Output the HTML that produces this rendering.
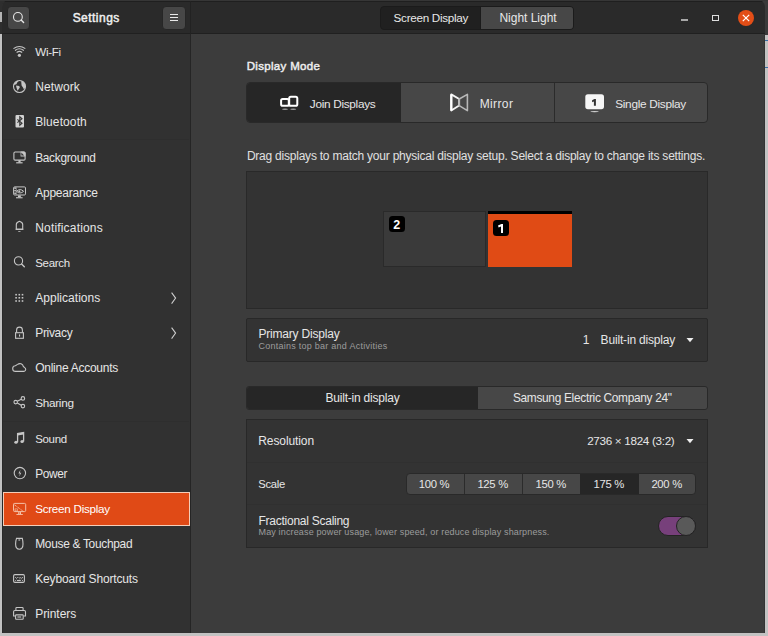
<!DOCTYPE html>
<html><head><meta charset="utf-8">
<style>
*{margin:0;padding:0;box-sizing:border-box}
html,body{width:768px;height:636px;overflow:hidden;background:#c2c2c2;font-family:"Liberation Sans",sans-serif}
.a{position:absolute}
.t{position:absolute;white-space:nowrap}
svg{position:absolute;overflow:visible}
#win{position:absolute;left:2px;top:0;width:763px;height:633px;background:#3c3c3c;border-radius:7px 7px 0 0;overflow:hidden}
#hdr{position:absolute;left:0;top:0;width:763px;height:34px;background:#2a2a2a;border-bottom:1px solid #202020;border-top:2px solid #1f1f1f}
#hdiv{position:absolute;left:188px;top:0;width:1px;height:34px;background:#222}
#side{position:absolute;left:0;top:34px;width:189px;height:599px;background:#313131;border-right:1px solid #252525}
.btn{position:absolute;background:#474747;border-radius:4px;border:1px solid #262626}
.box{position:absolute;background:#333333;border:1px solid #282828;border-radius:3px}
.sep{position:absolute;height:1px;background:#303030}
</style></head><body>
<div class="a" style="left:0;top:0;width:12px;height:34px;background:#2e2e2e"></div>
<div class="a" style="left:752px;top:0;width:16px;height:35px;background:#3a3a3a"></div>
<div class="a" style="left:765px;top:40px;width:3px;height:1px;background:#3a6ea5"></div>
<div class="a" style="left:765px;top:67px;width:3px;height:1px;background:#3a6ea5"></div>
<div class="a" style="left:0;top:12px;width:2px;height:10px;background:#b4b4b4"></div>
<div id="win">
  <div id="hdr"></div>
  <div id="hdiv"></div>
  <div id="side"></div>
</div>
<div class="a" style="left:0;top:0;width:768px;height:1px;background:#363636"></div>
<div class="a" style="left:2px;top:34px;width:1px;height:599px;background:#292929"></div>
<div class="a" style="left:764px;top:34px;width:1px;height:599px;background:#333"></div>
<!-- header buttons -->
<div class="btn" style="left:7px;top:6px;width:23px;height:23.8px"></div>
<svg style="left:8px;top:7px" width="22" height="22"><circle cx="9.9" cy="9.9" r="4.4" fill="none" stroke="#e6e6e6" stroke-width="1.1"/><line x1="13.1" y1="13.1" x2="15.6" y2="15.6" stroke="#e6e6e6" stroke-width="1.4" stroke-linecap="round"/></svg>
<div class="btn" style="left:162px;top:6px;width:23.8px;height:23.8px"></div>
<div class="a" style="left:170px;top:14px;width:8.2px;height:1.1px;background:#e8e8e8"></div><div class="a" style="left:170px;top:17px;width:8.2px;height:1.1px;background:#e8e8e8"></div><div class="a" style="left:170px;top:20px;width:8.2px;height:1.1px;background:#e8e8e8"></div>
<!-- tab switcher -->
<div class="a" style="left:380px;top:6px;width:194px;height:24px;border:1px solid #1b1b1b;border-radius:4px;background:#202020;overflow:hidden">
  <div class="a" style="left:99px;top:0;width:94px;height:22px;background:#474747;border-left:1px solid #1b1b1b"></div>
</div>
<!-- window controls -->
<div class="a" style="left:681px;top:19px;width:6.5px;height:1.6px;background:#a8a8a8"></div>
<div class="a" style="left:712px;top:14.8px;width:6.6px;height:6.2px;border:1.2px solid #dedede"></div>
<div class="a" style="left:738px;top:10px;width:16px;height:16px;border-radius:50%;background:#e34e17"></div>
<svg style="left:738px;top:10px" width="16" height="16"><g stroke="#fff" stroke-width="1.2"><line x1="4.8" y1="4.8" x2="11.2" y2="11.2"/><line x1="11.2" y1="4.8" x2="4.8" y2="11.2"/></g></svg>

<!-- selected sidebar row -->
<div class="a" style="left:2.8px;top:491.5px;width:187.7px;height:34.8px;background:#e04a16;border:1.2px solid #f5cdb8"></div>
<div class="a" style="left:3px;top:139px;width:186px;height:1px;background:#2e2e2e"></div>
<div class="a" style="left:3px;top:421px;width:186px;height:1px;background:#2e2e2e"></div>
<svg style="left:8px;top:40px" width="24" height="24" viewBox="0 0 24 24"><g fill="none" stroke="#c6c6c6" stroke-width="1.1" stroke-linecap="round">
<path d="M5.9 8.4 A9.1 9.1 0 0 1 16.9 8.4"/>
<path d="M7.4 10.3 A6.6 6.6 0 0 1 15.4 10.3"/>
<path d="M9.0 12.3 A4.1 4.1 0 0 1 13.8 12.3"/></g>
<circle cx="11.4" cy="15.3" r="1.6" fill="#c6c6c6"/></svg>
<svg style="left:8px;top:75px" width="24" height="24" viewBox="0 0 24 24"><circle cx="11.5" cy="11.5" r="6.0" fill="none" stroke="#c6c6c6" stroke-width="1.1"/>
<path d="M5.8 10.0 Q6.6 7.2 9.2 5.8 L10.6 6.0 Q9.0 7.6 8.4 9.2 Z" fill="#c6c6c6"/>
<path d="M8.0 10.6 L11.3 11.0 L11.8 12.6 L10.6 14.2 L9.6 15.8 L9.0 14.2 L8.4 12.2 Z" fill="#c6c6c6"/>
<path d="M13.2 6.2 L15.0 6.6 L17.2 9.4 L17.2 12.6 L16.0 14.4 L15.0 12.6 L13.6 10.6 L13.4 8.6 Z" fill="#c6c6c6"/></svg>
<svg style="left:8px;top:110px" width="24" height="24" viewBox="0 0 24 24"><rect x="7.5" y="4.9" width="8.5" height="12.6" rx="1" fill="#d2d2d2"/>
<path d="M9.4 9.4 L14.0 13.2 L11.8 15.2 L11.8 6.8 L14.0 8.8 L9.4 12.6" fill="none" stroke="#333" stroke-width="1.1"/></svg>
<svg style="left:8px;top:145px" width="24" height="24" viewBox="0 0 24 24"><rect x="5.9" y="7.0" width="11.2" height="8.1" rx="1.2" fill="none" stroke="#c6c6c6" stroke-width="1.1"/>
<path d="M12.6 6.4 H16 A1.5 1.5 0 0 1 17.5 7.9 V11.6 H12.6 Z" fill="#c6c6c6"/>
<path d="M13.3 7.6 L16.2 10.6 L13.3 10.6 Z" fill="#333"/>
<rect x="10.4" y="15.3" width="2.2" height="2.2" fill="#c6c6c6"/>
<rect x="8.2" y="17.2" width="6.4" height="1.2" fill="#c6c6c6"/></svg>
<svg style="left:8px;top:180px" width="24" height="24" viewBox="0 0 24 24"><rect x="5.6" y="6.9" width="11.9" height="8.1" rx="1.1" fill="none" stroke="#c6c6c6" stroke-width="1"/>
<g fill="#c6c6c6"><rect x="6.3" y="7.4" width="1.6" height="1.5"/><rect x="6.3" y="10.0" width="1.6" height="1.3"/><rect x="6.3" y="12.6" width="1.6" height="1.5"/></g>
<line x1="8.3" y1="7.4" x2="8.3" y2="14.6" stroke="#c6c6c6" stroke-width="0.6"/>
<path d="M8.6 11.3 Q12.0 7.9 15.6 11.3 Q12.0 14.6 8.6 11.3 Z" fill="none" stroke="#c6c6c6" stroke-width="1"/>
<path d="M11.3 10.0 L12.6 12.0 H10.0 Z" fill="#c6c6c6"/>
<rect x="10.0" y="15.4" width="2.8" height="1.9" fill="#c6c6c6"/>
<rect x="8.0" y="17.2" width="6.6" height="1.1" fill="#c6c6c6"/></svg>
<svg style="left:8px;top:215px" width="24" height="24" viewBox="0 0 24 24"><path d="M8.3 14.3 V9.6 Q8.3 7.4 11.5 6.3 Q14.7 7.4 14.7 9.6 V14.3 Z" fill="none" stroke="#c6c6c6" stroke-width="1.1"/>
<line x1="7.7" y1="14.3" x2="15.3" y2="14.3" stroke="#c6c6c6" stroke-width="1.2"/>
<path d="M9.9 15.9 H12.9 Q11.4 17.6 9.9 15.9 Z" fill="#c6c6c6"/></svg>
<svg style="left:8px;top:250px" width="24" height="24" viewBox="0 0 24 24"><circle cx="10.5" cy="10.9" r="4.1" fill="none" stroke="#c6c6c6" stroke-width="1.1"/>
<line x1="13.6" y1="14.0" x2="16.3" y2="16.7" stroke="#c6c6c6" stroke-width="1.4" stroke-linecap="round"/></svg>
<svg style="left:8px;top:286px" width="24" height="24" viewBox="0 0 24 24"><rect x="7.3" y="7.8999999999999995" width="1.6" height="1.6" fill="#c6c6c6"/><rect x="7.3" y="11.0" width="1.6" height="1.6" fill="#c6c6c6"/><rect x="7.3" y="14.2" width="1.6" height="1.6" fill="#c6c6c6"/><rect x="10.5" y="7.8999999999999995" width="1.6" height="1.6" fill="#c6c6c6"/><rect x="10.5" y="11.0" width="1.6" height="1.6" fill="#c6c6c6"/><rect x="10.5" y="14.2" width="1.6" height="1.6" fill="#c6c6c6"/><rect x="13.7" y="7.8999999999999995" width="1.6" height="1.6" fill="#c6c6c6"/><rect x="13.7" y="11.0" width="1.6" height="1.6" fill="#c6c6c6"/><rect x="13.7" y="14.2" width="1.6" height="1.6" fill="#c6c6c6"/></svg>
<svg style="left:8px;top:321px" width="24" height="24" viewBox="0 0 24 24"><rect x="7.6" y="11.7" width="7.8" height="5.6" fill="none" stroke="#c6c6c6" stroke-width="1.1"/>
<path d="M8.6 11.4 V9.0 A2.9 2.9 0 0 1 14.4 9.0 V11.4" fill="none" stroke="#c6c6c6" stroke-width="1.1"/>
<rect x="11" y="13.4" width="1.1" height="2.2" fill="#c6c6c6"/></svg>
<svg style="left:8px;top:356px" width="24" height="24" viewBox="0 0 24 24"><path d="M7.6 15.4 H16.0 A2.0 2.0 0 0 0 16.3 11.5 A1.8 1.8 0 0 0 15.4 10.6 A3.6 3.6 0 0 0 9.6 8.4 L7.4 9.8 A2.8 2.8 0 0 0 7.6 15.4 Z" fill="none" stroke="#c6c6c6" stroke-width="1.1"/></svg>
<svg style="left:8px;top:391px" width="24" height="24" viewBox="0 0 24 24"><g fill="none" stroke="#c6c6c6" stroke-width="1.1"><circle cx="7.7" cy="11.1" r="1.75"/><circle cx="14.9" cy="7.4" r="1.75"/><circle cx="14.9" cy="15.1" r="1.75"/>
<line x1="9.3" y1="10.2" x2="13.3" y2="8.2"/><line x1="9.3" y1="12.0" x2="13.3" y2="14.2"/></g></svg>
<svg style="left:8px;top:426px" width="24" height="24" viewBox="0 0 24 24"><path d="M9.6 16.2 V7.6 L15.6 6.6 V15.4" fill="none" stroke="#c6c6c6" stroke-width="1.3"/>
<path d="M9.6 7.6 L15.6 6.6 V8.6 L9.6 9.6 Z" fill="#c6c6c6"/>
<ellipse cx="8.0" cy="16.3" rx="1.7" ry="1.5" fill="#c6c6c6"/>
<ellipse cx="14.1" cy="15.4" rx="1.7" ry="1.5" fill="#c6c6c6"/></svg>
<svg style="left:8px;top:461px" width="24" height="24" viewBox="0 0 24 24"><circle cx="11.9" cy="12.1" r="5.7" fill="none" stroke="#c6c6c6" stroke-width="1.1"/>
<path d="M12.4 8.8 L10.4 12.4 H11.9 L11.3 15.6 L13.3 11.8 H11.9 Z" fill="#c6c6c6"/></svg>
<svg style="left:8px;top:497px" width="24" height="24" viewBox="0 0 24 24"><rect x="5.5" y="6.4" width="12.2" height="8.2" rx="1.2" fill="none" stroke="#f4c6ae" stroke-width="0.95"/>
<line x1="5.6" y1="7.2" x2="15.2" y2="14.3" stroke="#f4c6ae" stroke-width="0.9" stroke-dasharray="1.2 0.6"/>
<rect x="7.0" y="11.9" width="2.4" height="2.0" fill="none" stroke="#f4c6ae" stroke-width="0.6"/>
<rect x="10.2" y="15.1" width="1.2" height="1.9" fill="#f4c6ae"/><rect x="11.8" y="15.1" width="1.2" height="1.9" fill="#f4c6ae"/>
<rect x="8.4" y="17.0" width="6.4" height="0.9" fill="#f4c6ae"/></svg>
<svg style="left:8px;top:532px" width="24" height="24" viewBox="0 0 24 24"><path d="M8.5 6.4 H14.3 Q15.0 9.0 15.0 12.0 Q15.0 17.2 11.4 17.2 Q7.6 17.2 7.6 12.0 Q7.6 9.0 8.5 6.4 Z" fill="none" stroke="#c6c6c6" stroke-width="1.1"/>
<rect x="10.4" y="7.2" width="1.8" height="1.6" fill="#c6c6c6" opacity="0.7"/></svg>
<svg style="left:8px;top:567px" width="24" height="24" viewBox="0 0 24 24"><rect x="5.6" y="7.6" width="10.8" height="7.8" rx="1.3" fill="none" stroke="#c6c6c6" stroke-width="1.1"/>
<g fill="#c6c6c6"><rect x="7.2" y="10.0" width="0.9" height="0.9"/><rect x="8.9" y="10.0" width="0.9" height="0.9"/><rect x="10.6" y="10.0" width="0.9" height="0.9"/><rect x="12.3" y="10.0" width="0.9" height="0.9"/><rect x="14.0" y="10.0" width="0.9" height="0.9"/>
<rect x="8.0" y="11.3" width="0.9" height="0.9"/><rect x="11.4" y="11.3" width="0.9" height="0.9"/><rect x="13.2" y="11.3" width="0.9" height="0.9"/>
<rect x="7.2" y="13.0" width="0.9" height="0.9"/><rect x="9.0" y="12.9" width="3.8" height="1.1"/><rect x="14.0" y="13.0" width="0.9" height="0.9"/></g></svg>
<svg style="left:8px;top:602px" width="24" height="24" viewBox="0 0 24 24"><rect x="7.9" y="5.5" width="7.2" height="3.0" rx="0.8" fill="none" stroke="#c6c6c6" stroke-width="1.1"/>
<path d="M7.3 14.0 H5.6 V9.7 A1.2 1.2 0 0 1 6.8 8.5 H16.3 A1.2 1.2 0 0 1 17.5 9.7 V14.0 H15.6" fill="none" stroke="#c6c6c6" stroke-width="1.1"/>
<rect x="7.6" y="12.9" width="7.6" height="4.4" rx="0.6" fill="none" stroke="#c6c6c6" stroke-width="1.1"/>
<rect x="9.4" y="14.3" width="3.8" height="1.4" fill="#c6c6c6" opacity="0.8"/></svg>
<svg style="left:170px;top:291.8px" width="8" height="13"><path d="M1.6 0.6 L5.6 6.1 L1.6 11.6" fill="none" stroke="#cfcfcf" stroke-width="1.05"/></svg>
<svg style="left:170px;top:327px" width="8" height="13"><path d="M1.6 0.6 L5.6 6.1 L1.6 11.6" fill="none" stroke="#cfcfcf" stroke-width="1.05"/></svg>

<!-- mode selector -->
<div class="a" style="left:246px;top:82px;width:462px;height:41px;border:1px solid #292929;border-radius:4px;background:#474747;overflow:hidden">
  <div class="a" style="left:0;top:0;width:154px;height:39px;background:#262626"></div>
  <div class="a" style="left:307px;top:0;width:1px;height:39px;background:#2b2b2b"></div>
</div>
<!-- arrangement -->
<div class="a" style="left:246px;top:171px;width:462px;height:138px;background:#333;border:1px solid #292929"></div>
<div class="a" style="left:383px;top:211px;width:103px;height:56px;background:#3a3a3a;border:1px solid #2a2a2a"></div>
<div class="a" style="left:488px;top:211px;width:84px;height:55.5px;background:#e04b15;border-top:3.6px solid #000"></div>
<div class="a" style="left:389px;top:216.2px;width:16px;height:15.4px;background:#000;border-radius:3.5px"></div>
<div class="a" style="left:493px;top:220px;width:16px;height:16px;background:#000;border-radius:3.5px"></div>
<svg style="left:493px;top:220px" width="16" height="16"><path d="M5.0 5.6 L8.4 4.0 H10.0 V12.9 H8.0 V6.6 L5.6 7.4 Z" fill="#fff"/></svg>
<!-- primary display -->
<div class="box" style="left:246px;top:318px;width:462px;height:44px;border-radius:2px"></div>
<svg style="left:686px;top:338px" width="8" height="5"><path d="M0.5 0 L7.5 0 L4 4.2 Z" fill="#eee"/></svg>
<!-- tabs -->
<div class="a" style="left:246px;top:386px;width:462px;height:24px;border:1px solid #292929;border-radius:3px;background:#474747;overflow:hidden">
  <div class="a" style="left:0;top:0;width:231px;height:22px;background:#262626"></div>
</div>
<!-- resolution box -->
<div class="box" style="left:246px;top:419px;width:462px;height:129px;border-radius:0"></div>
<div class="sep" style="left:247px;top:462px;width:460px"></div>
<div class="sep" style="left:247px;top:504px;width:460px"></div>
<svg style="left:686px;top:439px" width="8" height="5"><path d="M0.5 0 L7.5 0 L4 4.2 Z" fill="#eee"/></svg>
<div class="a" style="left:406px;top:473px;width:290px;height:22px;border:1px solid #292929;border-radius:4px;background:#474747;overflow:hidden">
  <div class="a" style="left:57px;top:0;width:1px;height:20px;background:#2b2b2b"></div>
  <div class="a" style="left:115px;top:0;width:1px;height:20px;background:#2b2b2b"></div>
  <div class="a" style="left:173px;top:0;width:59px;height:20px;background:#262626"></div>
</div>
<!-- toggle -->
<div class="a" style="left:657.6px;top:515.8px;width:38.8px;height:20.6px;border-radius:10.3px;background:#77407b;border:1px solid #242424"></div>
<div class="a" style="left:675.8px;top:515.8px;width:20.6px;height:20.6px;border-radius:50%;background:#595959;border:1px solid #232323"></div>
<div class="t" style="left:72.65px;top:11.84px;font-size:12px;line-height:12px;letter-spacing:0.467px;color:#f0f0f0;-webkit-text-stroke:0.45px #f0f0f0;">Settings</div>
<div class="t" style="left:393.60px;top:11.90px;font-size:11.7px;line-height:11.7px;letter-spacing:-0.299px;color:#e8e8e8;">Screen Display</div>
<div class="t" style="left:499.40px;top:11.64px;font-size:12px;line-height:12px;letter-spacing:-0.006px;color:#e8e8e8;">Night Light</div>
<div class="t" style="left:35.20px;top:45.93px;font-size:11.66px;line-height:11.66px;letter-spacing:-0.298px;color:#e6e6e6;">Wi-Fi</div>
<div class="t" style="left:35.20px;top:80.64px;font-size:12px;line-height:12px;letter-spacing:0.098px;color:#e6e6e6;">Network</div>
<div class="t" style="left:35.20px;top:115.64px;font-size:12px;line-height:12px;letter-spacing:0.110px;color:#e6e6e6;">Bluetooth</div>
<div class="t" style="left:35.20px;top:152.64px;font-size:11.88px;line-height:11.88px;letter-spacing:-0.300px;color:#e6e6e6;">Background</div>
<div class="t" style="left:35.20px;top:186.64px;font-size:12px;line-height:12px;letter-spacing:-0.222px;color:#e6e6e6;">Appearance</div>
<div class="t" style="left:35.20px;top:221.64px;font-size:12px;line-height:12px;letter-spacing:0.180px;color:#e6e6e6;">Notifications</div>
<div class="t" style="left:35.20px;top:257.57px;font-size:11.49px;line-height:11.49px;letter-spacing:-0.301px;color:#e6e6e6;">Search</div>
<div class="t" style="left:35.20px;top:291.64px;font-size:12px;line-height:12px;letter-spacing:0.033px;color:#e6e6e6;">Applications</div>
<div class="t" style="left:35.20px;top:326.65px;font-size:11.99px;line-height:11.99px;letter-spacing:-0.301px;color:#e6e6e6;">Privacy</div>
<div class="t" style="left:35.20px;top:361.64px;font-size:12px;line-height:12px;letter-spacing:-0.261px;color:#e6e6e6;">Online Accounts</div>
<div class="t" style="left:35.20px;top:396.83px;font-size:11.78px;line-height:11.78px;letter-spacing:-0.301px;color:#e6e6e6;">Sharing</div>
<div class="t" style="left:35.20px;top:433.58px;font-size:11.48px;line-height:11.48px;letter-spacing:-0.299px;color:#e6e6e6;">Sound</div>
<div class="t" style="left:35.20px;top:468.67px;font-size:11.85px;line-height:11.85px;letter-spacing:-0.298px;color:#e6e6e6;">Power</div>
<div class="t" style="left:35.20px;top:502.87px;font-size:11.73px;line-height:11.73px;letter-spacing:-0.299px;color:#ffffff;">Screen Display</div>
<div class="t" style="left:35.20px;top:538.60px;font-size:11.93px;line-height:11.93px;letter-spacing:-0.301px;color:#e6e6e6;">Mouse &amp; Touchpad</div>
<div class="t" style="left:35.20px;top:572.64px;font-size:12px;line-height:12px;letter-spacing:-0.150px;color:#e6e6e6;">Keyboard Shortcuts</div>
<div class="t" style="left:35.20px;top:607.64px;font-size:12px;line-height:12px;letter-spacing:-0.043px;color:#e6e6e6;">Printers</div>
<div class="t" style="left:246.70px;top:60.57px;font-size:11.5px;line-height:11.5px;letter-spacing:0.319px;color:#eeeeee;-webkit-text-stroke:0.45px #eeeeee;">Display Mode</div>
<div class="t" style="left:309.80px;top:98.91px;font-size:11.8px;line-height:11.8px;letter-spacing:-0.301px;color:#e6e6e6;">Join Displays</div>
<div class="t" style="left:479.70px;top:98.14px;font-size:12px;line-height:12px;letter-spacing:0.379px;color:#e6e6e6;">Mirror</div>
<div class="t" style="left:615.20px;top:98.88px;font-size:11.84px;line-height:11.84px;letter-spacing:-0.302px;color:#e6e6e6;">Single Display</div>
<div class="t" style="left:246.90px;top:149.94px;font-size:12px;line-height:12px;letter-spacing:-0.226px;color:#e0e0e0;">Drag displays to match your physical display setup. Select a display to change its settings.</div>
<div class="t" style="left:393.20px;top:218.82px;font-size:12.5px;line-height:12.5px;letter-spacing:0.000px;color:#fff;font-weight:bold;">2</div>
<div class="t" style="left:258.40px;top:327.84px;font-size:12px;line-height:12px;letter-spacing:-0.194px;color:#e6e6e6;">Primary Display</div>
<div class="t" style="left:258.40px;top:341.98px;font-size:9px;line-height:9px;letter-spacing:0.259px;color:#9c9c9c;">Contains top bar and Activities</div>
<div class="t" style="left:582.80px;top:333.54px;font-size:12px;line-height:12px;letter-spacing:0.000px;color:#e6e6e6;">1</div>
<div class="t" style="left:600.60px;top:333.54px;font-size:12px;line-height:12px;letter-spacing:-0.173px;color:#e6e6e6;">Built-in display</div>
<div class="t" style="left:325.50px;top:391.74px;font-size:12px;line-height:12px;letter-spacing:-0.211px;color:#e6e6e6;">Built-in display</div>
<div class="t" style="left:512.90px;top:392.94px;font-size:11.89px;line-height:11.89px;letter-spacing:-0.298px;color:#e6e6e6;">Samsung Electric Company 24"</div>
<div class="t" style="left:258.30px;top:434.64px;font-size:12px;line-height:12px;letter-spacing:-0.100px;color:#e6e6e6;">Resolution</div>
<div class="t" style="left:587.20px;top:435.13px;font-size:11.66px;line-height:11.66px;letter-spacing:-0.299px;color:#e6e6e6;">2736 × 1824 (3:2)</div>
<div class="t" style="left:258.30px;top:478.76px;font-size:11.27px;line-height:11.27px;letter-spacing:-0.299px;color:#e6e6e6;">Scale</div>
<div class="t" style="left:418.80px;top:478.84px;font-size:11.29px;line-height:11.29px;letter-spacing:-0.302px;color:#e6e6e6;">100 %</div>
<div class="t" style="left:477.40px;top:478.84px;font-size:11.29px;line-height:11.29px;letter-spacing:-0.302px;color:#e6e6e6;">125 %</div>
<div class="t" style="left:535.50px;top:478.84px;font-size:11.29px;line-height:11.29px;letter-spacing:-0.302px;color:#e6e6e6;">150 %</div>
<div class="t" style="left:593.60px;top:478.84px;font-size:11.29px;line-height:11.29px;letter-spacing:-0.302px;color:#e6e6e6;">175 %</div>
<div class="t" style="left:651.40px;top:478.84px;font-size:11.29px;line-height:11.29px;letter-spacing:-0.302px;color:#e6e6e6;">200 %</div>
<div class="t" style="left:258.50px;top:514.54px;font-size:12px;line-height:12px;letter-spacing:-0.255px;color:#e6e6e6;">Fractional Scaling</div>
<div class="t" style="left:258.50px;top:528.28px;font-size:9px;line-height:9px;letter-spacing:0.147px;color:#9c9c9c;">May increase power usage, lower speed, or reduce display sharpness.</div>
<svg style="left:276px;top:90px" width="28" height="24">
<rect x="5.1" y="8.9" width="7.7" height="6.9" rx="1.6" fill="none" stroke="#fff" stroke-width="2"/>
<rect x="13.2" y="6.7" width="8.1" height="9.1" rx="1.6" fill="none" stroke="#fff" stroke-width="2"/>
<ellipse cx="9" cy="19.3" rx="3" ry="0.7" fill="#9a9a9a"/>
<ellipse cx="17.2" cy="19.3" rx="3" ry="0.7" fill="#9a9a9a"/></svg>
<svg style="left:446px;top:90px" width="28" height="24">
<path d="M5.3 4.4 L13.2 9.0 V15.6 L5.3 20.6 Z" fill="none" stroke="#f4f4f4" stroke-width="1.8" stroke-linejoin="round"/>
<path d="M21.4 4.4 L13.2 9.0 V15.6 L21.4 20.6 Z" fill="none" stroke="#b8b8b8" stroke-width="1.6" stroke-linejoin="round"/>
<line x1="5.3" y1="4.4" x2="5.3" y2="20.6" stroke="#fff" stroke-width="2.2"/></svg>
<svg style="left:580px;top:90px" width="28" height="24">
<rect x="5.3" y="4.2" width="18.7" height="15" rx="2.6" fill="#f6f6f6"/>
<path d="M12.1 10.2 L14.4 9.0 H15.9 V15.8 H13.9 V11.4 L12.1 12.2 Z" fill="#333"/>
<ellipse cx="14.6" cy="21.6" rx="4.2" ry="0.6" fill="#cfcfcf"/></svg>
</body></html>
